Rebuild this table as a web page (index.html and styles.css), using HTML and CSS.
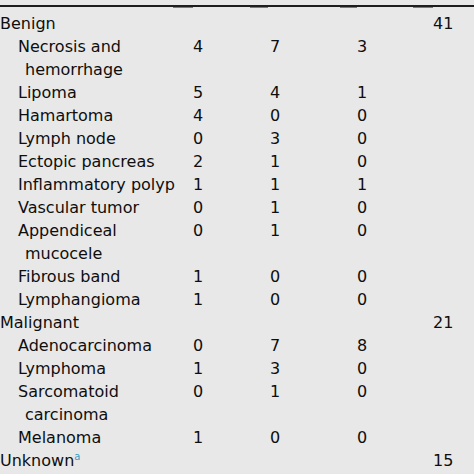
FILE: index.html
```html
<!DOCTYPE html>
<html>
<head>
<meta charset="utf-8">
<link rel="stylesheet" href="styles.css">
</head>
<body>
<div class="page">
  <div class="rule"><span class="tick t1"></span><span class="tick t2"></span><span class="tick t3"></span><span class="tick t4"></span></div>
  <div class="table">
    <div class="row"><div class="cat">Benign</div><div></div><div></div><div></div><div class="tot">41</div></div>
    <div class="row"><div class="sub">Necrosis and<br>hemorrhage</div><div>4</div><div>7</div><div>3</div><div></div></div>
    <div class="row"><div class="sub">Lipoma</div><div>5</div><div>4</div><div>1</div><div></div></div>
    <div class="row"><div class="sub">Hamartoma</div><div>4</div><div>0</div><div>0</div><div></div></div>
    <div class="row"><div class="sub">Lymph node</div><div>0</div><div>3</div><div>0</div><div></div></div>
    <div class="row"><div class="sub">Ectopic pancreas</div><div>2</div><div>1</div><div>0</div><div></div></div>
    <div class="row"><div class="sub">Inflammatory polyp</div><div>1</div><div>1</div><div>1</div><div></div></div>
    <div class="row"><div class="sub">Vascular tumor</div><div>0</div><div>1</div><div>0</div><div></div></div>
    <div class="row"><div class="sub">Appendiceal<br>mucocele</div><div>0</div><div>1</div><div>0</div><div></div></div>
    <div class="row"><div class="sub">Fibrous band</div><div>1</div><div>0</div><div>0</div><div></div></div>
    <div class="row"><div class="sub">Lymphangioma</div><div>1</div><div>0</div><div>0</div><div></div></div>
    <div class="row"><div class="cat">Malignant</div><div></div><div></div><div></div><div class="tot">21</div></div>
    <div class="row"><div class="sub">Adenocarcinoma</div><div>0</div><div>7</div><div>8</div><div></div></div>
    <div class="row"><div class="sub">Lymphoma</div><div>1</div><div>3</div><div>0</div><div></div></div>
    <div class="row"><div class="sub">Sarcomatoid<br>carcinoma</div><div>0</div><div>1</div><div>0</div><div></div></div>
    <div class="row"><div class="sub">Melanoma</div><div>1</div><div>0</div><div>0</div><div></div></div>
    <div class="row"><div class="cat">Unknown<sup class="note">a</sup></div><div></div><div></div><div></div><div class="tot">15</div></div>
  </div>
</div>
</body>
</html>
```
FILE: styles.css
```css
html, body {
  margin: 0;
  padding: 0;
  background: #e8e8e8;
}
.page {
  width: 474px;
  height: 474px;
  overflow: hidden;
  background: #e8e8e8;
  font-family: "DejaVu Sans", Verdana, sans-serif;
  font-size: 16px;
  color: #0e0e0e;
}
.rule {
  margin-top: 5px;
  border-top: 2px solid #1e1e1e;
  height: 1px;
  display: flex;
}
.tick {
  height: 1px;
  background: #7a7a7a;
}
.t1 { margin-left: 173px; width: 20px; }
.t2 { margin-left: 57px; width: 18px; }
.t3 { margin-left: 72px; width: 17px; }
.t4 { margin-left: 56px; width: 20px; }
.table {
  margin-top: 4px;
}
.row {
  display: grid;
  grid-template-columns: 193px 77px 87px 76px 1fr;
  line-height: 23px;
}
.cat {
  padding-left: 0;
}
.sub {
  padding-left: 25px;
  text-indent: -7px;
}
.note {
  color: #3a9bc0;
  font-size: 10px;
  line-height: 0;
  vertical-align: 6px;
}
```
